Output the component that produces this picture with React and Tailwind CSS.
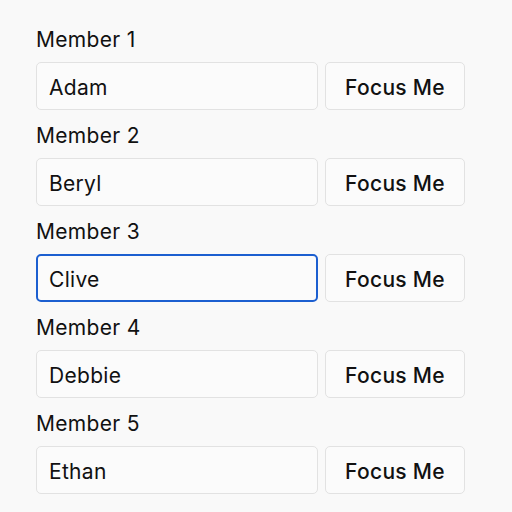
import React from 'react';

const members = ['Adam', 'Beryl', 'Clive', 'Debbie', 'Ethan'];

const MemberRow = ({ index, name, focused }) => (
  <div className="mb-3">
    <label className="block text-[21px] leading-[28px] tracking-[0.3px] text-[#111] mb-2">Member {index}</label>
    <div className="flex gap-[7px]">
      <div
        className={`w-[282px] h-12 rounded-[5px] bg-[#fbfbfb] flex items-center pt-[3px] text-[21px] tracking-[0.3px] text-[#111] ${
          focused ? 'border-2 border-[#1c5fd0] pl-[11px]' : 'border border-[#e2e2e2] pl-3'
        }`}
      >
        {name}
      </div>
      <button className="w-[140px] h-12 rounded-[5px] border border-[#e2e2e2] bg-[#fbfbfb] pt-[3px] text-[21px] tracking-[0.3px] font-medium text-[#111]">
        Focus Me
      </button>
    </div>
  </div>
);

export default function App() {
  return (
    <div className="w-[512px] h-[512px] overflow-hidden bg-[#f9f9f9] pl-9 pt-[26px]" style={{ fontFamily: 'Inter, "Liberation Sans", sans-serif' }}>
      {members.map((m, i) => (
        <MemberRow key={m} index={i + 1} name={m} focused={i === 2} />
      ))}
    </div>
  );
}
